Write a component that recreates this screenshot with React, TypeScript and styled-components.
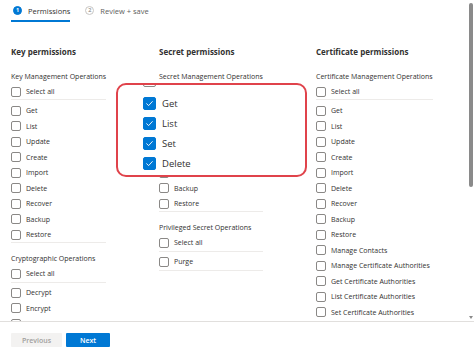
import React from "react";
import styled, { createGlobalStyle } from "styled-components";

const Global = createGlobalStyle`
  html, body { margin: 0; padding: 0; background: #fff; }
  body { font-family: "Open Sans", "Noto Sans", sans-serif; color: #323130; }
  * { box-sizing: border-box; }
`;

const Page = styled.div`
  width: 474px;
  height: 357px;
  display: flex;
  flex-direction: column;
  overflow: hidden;
`;

const Main = styled.div`
  height: 321px;
  display: flex;
  flex-direction: row;
`;

const ScrollArea = styled.div`
  position: relative;
  flex: 1;
  overflow: hidden;
`;

const Tabs = styled.div`
  display: flex;
  gap: 13px;
  padding: 0 11px;
`;

const Tab = styled.div<{ $active?: boolean }>`
  display: flex;
  align-items: center;
  gap: 6px;
  height: 22px;
  padding: 1px 0 0 2px;
  font-size: 7.5px;
  color: ${(p) => (p.$active ? "#323130" : "#605e5c")};
  border-bottom: 2px solid ${(p) => (p.$active ? "#0078d4" : "transparent")};
`;

const StepDot = styled.span<{ $active?: boolean }>`
  width: 9px;
  height: 9px;
  border-radius: 50%;
  display: flex;
  align-items: center;
  justify-content: center;
  font-size: 5.5px;
  font-weight: 700;
  line-height: 1;
  background: ${(p) => (p.$active ? "#0078d4" : "#fff")};
  color: ${(p) => (p.$active ? "#fff" : "#a19f9d")};
  border: 1px solid ${(p) => (p.$active ? "#0078d4" : "#c8c6c4")};
`;

const Columns = styled.div`
  display: grid;
  grid-template-columns: 148px 157px auto;
  padding-left: 11px;
  margin-top: 24px;
`;

const Column = styled.div`
  display: flex;
  flex-direction: column;
  align-items: flex-start;
`;

const Heading = styled.div`
  font-size: 8px;
  font-weight: 700;
  line-height: 12px;
  margin-bottom: 3px;
  white-space: nowrap;
`;

const Groups = styled.div`
  display: flex;
  flex-direction: column;
  padding-right: 2px;
`;

const Group = styled.div`
  display: flex;
  flex-direction: column;
  margin-top: 10px;
`;

const GroupLabel = styled.div`
  font-size: 7px;
  line-height: 11px;
  white-space: nowrap;
  margin-bottom: 1.75px;
`;

const SelectAllRow = styled.div`
  border-bottom: 1px solid #edebe9;
`;

const Items = styled.div`
  padding-top: 2.5px;
  border-bottom: 1px solid #edebe9;
`;

const Row = styled.div`
  height: 15.5px;
  display: flex;
  align-items: center;
  gap: 5px;
  font-size: 7px;
  white-space: nowrap;
`;

const Box = styled.span`
  width: 10px;
  height: 10px;
  flex: none;
  border: 1px solid #8a8886;
  border-radius: 2px;
  background: #fff;
`;

const Overlay = styled.div`
  position: absolute;
  left: 116px;
  top: 83px;
  width: 191px;
  height: 94px;
  border: 2px solid #e0434b;
  border-radius: 10px;
  background: #fff;
  overflow: hidden;
  padding-left: 25px;
`;

const ZoomList = styled.div`
  margin-top: -14.5px;
  display: flex;
  flex-direction: column;
`;

const ZoomRow = styled.div<{ $gapAfter?: number }>`
  height: 20px;
  display: flex;
  align-items: center;
  gap: 6px;
  font-size: 9.5px;
  margin-bottom: ${(p) => p.$gapAfter ?? 0}px;
`;

const BigBox = styled.span<{ $checked?: boolean }>`
  width: 13px;
  height: 13px;
  flex: none;
  border-radius: 2px;
  display: flex;
  align-items: center;
  justify-content: center;
  background: ${(p) => (p.$checked ? "#0078d4" : "#fff")};
  border: 1px solid ${(p) => (p.$checked ? "#0078d4" : "#8a8886")};
`;

const Track = styled.div`
  width: 7px;
  display: flex;
  flex-direction: column;
  align-items: center;
  padding: 3px 0 2px;
`;

const Thumb = styled.div`
  width: 4px;
  height: 184px;
  border-radius: 2px;
  background: #8a8a8a;
`;

const Spacer = styled.div`
  flex: 1;
`;

const Arrow = styled.div`
  width: 0;
  height: 0;
  border-left: 2.5px solid transparent;
  border-right: 2.5px solid transparent;
  border-top: 3px solid #8a8a8a;
`;

const Footer = styled.div`
  flex: 1;
  border-top: 1px solid #e1dfdd;
  display: flex;
  align-items: flex-start;
  gap: 4px;
  padding: 11px 11px 0;
`;

const Button = styled.button<{ $primary?: boolean }>`
  height: 14px;
  width: ${(p) => (p.$primary ? 44 : 51)}px;
  border: none;
  border-radius: 1px;
  padding: 0;
  font-family: inherit;
  font-size: 7px;
  font-weight: 600;
  display: flex;
  align-items: center;
  justify-content: center;
  background: ${(p) => (p.$primary ? "#0078d4" : "#f3f2f1")};
  color: ${(p) => (p.$primary ? "#fff" : "#a19f9d")};
`;

type GroupDef = { label: string; items: string[] };

const keyGroups: GroupDef[] = [
  {
    label: "Key Management Operations",
    items: ["Get", "List", "Update", "Create", "Import", "Delete", "Recover", "Backup", "Restore"],
  },
  {
    label: "Cryptographic Operations",
    items: ["Decrypt", "Encrypt", "Unwrap Key", "Wrap Key", "Verify", "Sign"],
  },
];

const secretGroups: GroupDef[] = [
  {
    label: "Secret Management Operations",
    items: ["Get", "List", "Set", "Delete", "Recover", "Backup", "Restore"],
  },
  { label: "Privileged Secret Operations", items: ["Purge"] },
];

const certGroups: GroupDef[] = [
  {
    label: "Certificate Management Operations",
    items: [
      "Get",
      "List",
      "Update",
      "Create",
      "Import",
      "Delete",
      "Recover",
      "Backup",
      "Restore",
      "Manage Contacts",
      "Manage Certificate Authorities",
      "Get Certificate Authorities",
      "List Certificate Authorities",
      "Set Certificate Authorities",
      "Delete Certificate Authorities",
    ],
  },
  { label: "Privileged Certificate Operations", items: ["Purge"] },
];

const Check = () => (
  <svg width="9" height="9" viewBox="0 0 12 12" fill="none">
    <path d="M2.2 6.3 L4.8 8.8 L9.8 3.4" stroke="#fff" strokeWidth="1.2" strokeLinecap="round" strokeLinejoin="round" />
  </svg>
);

const PermColumn = ({ title, groups }: { title: string; groups: GroupDef[] }) => (
  <Column>
    <Heading>{title}</Heading>
    <Groups>
      {groups.map((g) => (
        <Group key={g.label}>
          <GroupLabel>{g.label}</GroupLabel>
          <SelectAllRow>
            <Row>
              <Box />
              Select all
            </Row>
          </SelectAllRow>
          <Items>
            {g.items.map((it) => (
              <Row key={it}>
                <Box />
                {it}
              </Row>
            ))}
          </Items>
        </Group>
      ))}
    </Groups>
  </Column>
);

export default function App() {
  return (
    <Page>
      <Global />
      <Main>
        <ScrollArea>
          <Tabs>
            <Tab $active>
              <StepDot $active>1</StepDot>
              Permissions
            </Tab>
            <Tab>
              <StepDot>2</StepDot>
              Review + save
            </Tab>
          </Tabs>
          <Columns>
            <PermColumn title="Key permissions" groups={keyGroups} />
            <PermColumn title="Secret permissions" groups={secretGroups} />
            <PermColumn title="Certificate permissions" groups={certGroups} />
          </Columns>
          <Overlay>
            <ZoomList>
              <ZoomRow $gapAfter={2.5}>
                <BigBox />
                Select all
              </ZoomRow>
              {["Get", "List", "Set", "Delete"].map((t) => (
                <ZoomRow key={t}>
                  <BigBox $checked>
                    <Check />
                  </BigBox>
                  {t}
                </ZoomRow>
              ))}
            </ZoomList>
          </Overlay>
        </ScrollArea>
        <Track>
          <Thumb />
          <Spacer />
          <Arrow />
        </Track>
      </Main>
      <Footer>
        <Button>Previous</Button>
        <Button $primary>Next</Button>
      </Footer>
    </Page>
  );
}
